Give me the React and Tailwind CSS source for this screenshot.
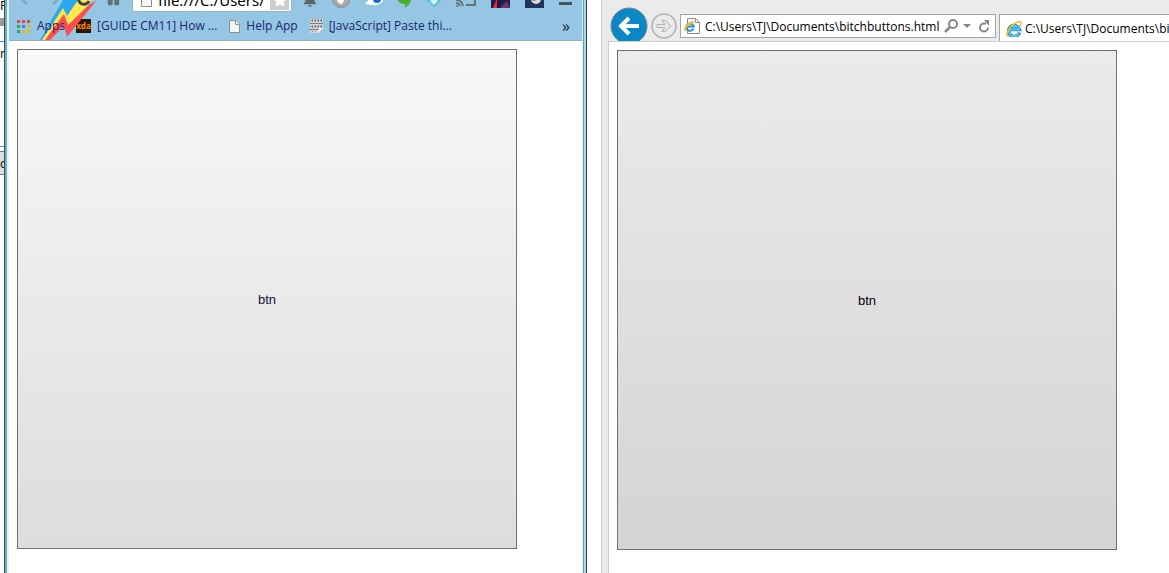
import { FaBell, FaPause, FaStar } from "react-icons/fa";

// Icons
const PageIcon = () => (
  <svg width="11" height="13" viewBox="0 0 11 13" className="shrink-0">
    <path d="M.5.5h6l4 4v8H.5z" fill="#f7f7f7" stroke="#8d8d8d" />
    <path d="M6.5.5v4h4" fill="#fff" stroke="#8d8d8d" />
  </svg>
);

const appColors = [
  "#e8453c", "#e8453c", "#e8453c",
  "#2fa35a", "#3b7ded", "#f4b400",
  "#2fa35a", "#f4b400", "#f4b400",
];

const AppsIcon = () => (
  <svg width="13" height="13" viewBox="0 0 13 13" className="shrink-0">
    {appColors.map((color, i) => (
      <rect
        key={i}
        x={(i % 3) * 5}
        y={Math.floor(i / 3) * 5}
        width="3"
        height="3"
        fill={color}
      />
    ))}
  </svg>
);

const PasteIcon = () => (
  <svg width="13" height="14" viewBox="0 0 13 14" className="shrink-0">
    <path d="M0 0h13v9l-4 5H0z" fill="#d4d4d4" />
    <path
      d="M1 1.500h12M0 4.500h13M1 7.500h12M0 10.500h9"
      stroke="#777"
      strokeDasharray="2 1"
    />
    <path
      d="M2.500 0v14M5.500 0v14M8.500 0v12M11.500 0v9"
      stroke="#888"
      strokeDasharray="1 1"
    />
    <path d="M8 14l5-5H9z" fill="#fff" />
  </svg>
);

const Bolt = () => (
  <svg
    width="60"
    height="41"
    viewBox="0 0 60 41"
    className="pointer-events-none absolute top-0 left-[31px]"
  >
    <path d="M23 0H38L26 20L22 12L5 40H0z" fill="#29a9ee" />
    <path d="M38 0H52L27 30L23 19L8 40H2L23 8L27 16z" fill="#ffe94f" />
    <path d="M50 4L56 1L27 37L24 26L10 40H5L24 14L28 25z" fill="#ff4e50" />
  </svg>
);

const IeLogo = ({ size }) => (
  <svg width={size} height={size} viewBox="0 0 16 16" className="shrink-0">
    <path
      d="M13.500 11.500A5.500 5.500 0 1 1 13.500 8.500H4"
      fill="none"
      stroke="#2385c4"
      strokeWidth="3.400"
    />
    <path
      d="M13.300 11A5.300 5.300 0 1 1 13.200 8.500H4"
      fill="none"
      stroke="#5cc0ee"
      strokeWidth="2"
    />
    <path
      d="M3 15C-1 16 1 9 6 4.500C10 1 15-.5 15 2c0 1-.4 2-1 3"
      fill="none"
      stroke="#f3bd1d"
      strokeWidth="1.500"
    />
  </svg>
);

const IePageIcon = () => (
  <svg width="16" height="16" viewBox="0 0 16 16" className="shrink-0">
    <path d="M3.500.5h8l4 4v11h-12z" fill="#fff" stroke="#8a8a8a" />
    <path d="M11.500.5v4h4" fill="none" stroke="#8a8a8a" />
    <path
      d="M9.500 10.500A3.700 3.700 0 1 1 9.700 8.500H3"
      fill="none"
      stroke="#2f8fd8"
      strokeWidth="2"
    />
    <path
      d="M1.500 13C0 11 3 5 10 4"
      fill="none"
      stroke="#f3bd1d"
      strokeWidth="2"
    />
  </svg>
);

// Only the lower part of these shows, so each one is drawn from its bottom edge
const extensions = [
  {
    name: "Notifications",
    width: 14,
    art: <FaBell size={14} color="#5f666b" className="mb-[5px]" />,
  },
  {
    name: "Block",
    width: 18,
    art: (
      <svg width="18" height="18" viewBox="0 0 18 18" className="mb-1">
        <path d="M5.500 1h7L17 5.500v7L12.500 17h-7L1 12.500v-7z" fill="#aaa" stroke="#858585" />
        <path d="M6 5h6v6l-2 3H8l-3-3z" fill="#fff" />
      </svg>
    ),
  },
  {
    name: "Messages",
    width: 18,
    art: (
      <svg width="18" height="16" viewBox="0 0 18 16" className="mb-[6px]">
        <path d="M3 3h15v8q-4 5-11 4l-7-1l3-3z" fill="#fff" />
        <circle cx="12" cy="9" r="4" fill="#1464d2" />
      </svg>
    ),
  },
  {
    name: "Hangouts",
    width: 13,
    art: (
      <svg width="13" height="14" viewBox="0 0 13 14" className="mb-1">
        <path d="M0 0h13v7q-1 3-6 7v-4Q2 10 0 7z" fill="#4caf35" />
      </svg>
    ),
  },
  {
    name: "Downloads",
    width: 14,
    art: (
      <svg width="14" height="14" viewBox="0 0 14 14" className="mb-[5px]">
        <path d="M0 0h14v8l-7 6l-7-6z" fill="#57c3cb" />
        <path d="M3 8l4-2l4 2l-4 4z" fill="#d4f5f5" />
      </svg>
    ),
  },
  {
    name: "Cast",
    width: 20,
    art: (
      <svg
        width="20"
        height="14"
        viewBox="0 0 20 14"
        className="mb-[5px]"
        fill="none"
        stroke="#66747c"
        strokeWidth="2"
      >
        <path d="M1 4V1h18v11h-9M0 7q6 0 7 6M0 10q3 0 4 3" />
        <circle cx="1" cy="13" r="1" fill="#66747c" stroke="none" />
      </svg>
    ),
  },
  {
    name: "Speed",
    width: 19,
    art: (
      <svg width="19" height="16" viewBox="0 0 19 16" className="mb-1">
        <path d="M0 0h19v16H0z" fill="#1c1f4c" />
        <path d="M10 14l6-5l3 7h-9z" fill="#6b3467" />
        <path d="M6 6l-4 10h4z" fill="#f22" />
      </svg>
    ),
  },
  {
    name: "Night mode",
    width: 19,
    art: (
      <svg width="19" height="16" viewBox="0 0 19 16" className="mb-1">
        <path d="M0 0h19v16H0z" fill="#1e355c" />
        <circle cx="11" cy="7" r="5" fill="#dedede" />
        <circle cx="9" cy="6" r="3" fill="#888" />
      </svg>
    ),
  },
  {
    name: "Menu",
    width: 13,
    art: (
      <svg width="13" height="14" viewBox="0 0 13 14" className="mb-[7px]">
        <path d="M0 7h13v2H0zM0 11h13v3H0z" fill="#47545c" />
      </svg>
    ),
  },
];

const bookmarks = [
  {
    label: "[GUIDE CM11] How ...",
    icon: (
      <span className="flex h-[14px] w-[15px] shrink-0 items-center justify-center bg-[#2b1600] text-[8px] font-bold text-[#ff8800]">
        xda
      </span>
    ),
  },
  { label: "Help App", icon: <PageIcon /> },
  { label: "[JavaScript] Paste thi...", icon: <PasteIcon /> },
];

// Strip of the window that lies behind everything
const BackgroundWindow = () => (
  <div className="flex w-1 shrink-0 flex-col overflow-hidden bg-white text-xs text-[#111]">
    <div className="h-[18px] leading-3">F</div>
    <div className="h-2 bg-[#999]" />
    <div className="h-4 border-b border-[#3b9bd8]" />
    <div className="h-[105px] border-b border-[#3b9bd8] leading-6">n</div>
    <div className="mt-1 h-6 border-y border-[#777] bg-[#ddd] leading-6">c</div>
  </div>
);

const Chrome = () => (
  <section className="flex min-w-0 shrink-0 basis-[583px] border-x border-l-[#3c4b54] border-r-[#303b42]">
    <div className="w-[4px] shrink-0 border-r-2 border-l-2 border-l-[#6fb0c4] border-r-[#e4f4f8] bg-[#a6dbea]" />
    <div className="relative flex min-w-0 flex-1 flex-col">
      <header className="border-b border-[#a3acb0] bg-[#95c7e4]">
        <div className="flex h-3 items-end">
          <button aria-label="Back" className="ml-[10px] w-7">
            <svg
              width="14"
              height="14"
              viewBox="0 0 14 14"
              className="mb-[7px]"
              fill="none"
              stroke="#79abc9"
              strokeWidth="3"
            >
              <path d="M8 1L2 7l6 6M2 7h12" />
            </svg>
          </button>
          <button aria-label="Forward" className="w-7">
            <svg
              width="14"
              height="14"
              viewBox="0 0 14 14"
              className="mb-[7px]"
              fill="none"
              stroke="#79abc9"
              strokeWidth="3"
            >
              <path d="M6 1l6 6l-6 6M12 7H0" />
            </svg>
          </button>
          <button aria-label="Reload" className="relative z-10 ml-[2px] w-[30px]">
            <svg
              width="14"
              height="14"
              viewBox="0 0 14 14"
              className="mb-[6px]"
              fill="none"
              stroke="#3b4449"
              strokeWidth="3"
            >
              <path d="M12 9A5.500 5.500 0 1 1 11 3" />
            </svg>
          </button>
          <button aria-label="Pause" className="w-[25px]">
            <FaPause size={13} color="#63727a" className="mb-[6px]" />
          </button>
          <div className="flex h-6 w-[160px] shrink-0 items-center rounded-[3px] border border-[#8bb6cd] bg-white pr-[2px] pl-2">
            <PageIcon />
            <input
              aria-label="Address"
              defaultValue="file:///C:/Users/"
              className="ml-[6px] h-5 w-0 flex-1 text-[15px] text-black outline-none"
            />
            <button
              aria-label="Bookmark"
              className="flex h-5 w-[19px] items-center justify-center bg-[#ccc]"
            >
              <FaStar size={14} color="#fff" />
            </button>
          </div>
          <div className="mr-[10px] ml-[11px] flex flex-1 items-end justify-between">
            {extensions.map(({ name, width, art }) => (
              <button key={name} aria-label={name} className="shrink-0" style={{ width }}>
                {art}
              </button>
            ))}
          </div>
        </div>
        <nav className="flex h-7 items-center pl-2 font-['Open_Sans'] text-xs text-[#20236f]">
          <a href="#apps" className="flex items-center gap-[7px]">
            <AppsIcon />
            <span className="relative z-10">Apps</span>
          </a>
          <div className="ml-[11px] flex items-center gap-3">
            {bookmarks.map(({ label, icon }) => (
              <a
                key={label}
                href="#bookmark"
                className="flex items-center gap-[6px] whitespace-nowrap"
              >
                {icon}
                {label}
              </a>
            ))}
          </div>
          <button aria-label="More bookmarks" className="mr-3 ml-auto text-base text-[#222]">
            »
          </button>
        </nav>
      </header>
      <Bolt />
      <main className="flex-1 bg-white p-2">
        <button className="h-[500px] w-[500px] border border-[#707070] bg-linear-to-b from-[#f8f8f8] to-[#dddddd] pt-[2px] font-['Liberation_Sans'] text-[13px] text-[#11103f]">
          btn
        </button>
      </main>
    </div>
    <div className="w-[4px] shrink-0 border-r-2 border-l border-l-[#dceff5] border-r-[#a2dcf0] bg-[#6b9cad]" />
  </section>
);

const InternetExplorer = () => (
  <section className="ml-[14px] flex min-w-0 flex-1 flex-col border-l border-[#cfcfcf] bg-[#ebebeb] pl-[6px]">
    <header className="flex h-[41px] shrink-0 items-end overflow-hidden pl-[2px] font-['Open_Sans'] text-xs text-black">
      <button aria-label="Back" className="-mb-1 shrink-0">
        <svg width="38" height="38" viewBox="0 0 38 38">
          <circle cx="19" cy="19" r="18" fill="#0b87c6" stroke="#6f8793" />
          <path
            d="M29 19H11M19 11l-8 8l8 8"
            fill="none"
            stroke="#fff"
            strokeWidth="4"
          />
        </svg>
      </button>
      <button aria-label="Forward" className="mb-[2px] ml-[3px] shrink-0">
        <svg width="26" height="26" viewBox="0 0 26 26" fill="none" stroke="#b0b0b0">
          <circle cx="13" cy="13" r="12" strokeWidth="1.500" />
          <path d="M6 11.500h8l-3-4h3l6 5.500l-6 5.500h-3l3-4H6z" />
        </svg>
      </button>
      <div className="mb-[3px] ml-[3px] flex h-6 w-[316px] shrink-0 items-center border border-[#a3a3a3] bg-white pr-[5px] pl-[3px]">
        <IePageIcon />
        <input
          aria-label="Address"
          defaultValue="C:\Users\TJ\Documents\bitchbuttons.html"
          className="ml-[5px] h-5 w-0 flex-1 pt-px outline-none"
        />
        <button aria-label="Search">
          <svg
            width="15"
            height="14"
            viewBox="0 0 15 14"
            fill="none"
            stroke="#858585"
            strokeWidth="2"
          >
            <circle cx="9" cy="5" r="4" />
            <path d="M6 8l-5 5" strokeWidth="2.500" />
          </svg>
        </button>
        <button aria-label="Search options" className="ml-1">
          <svg width="8" height="4" viewBox="0 0 8 4">
            <path d="M0 0h8L4 4z" fill="#858585" />
          </svg>
        </button>
        <button aria-label="Refresh" className="ml-[7px]">
          <svg width="12" height="13" viewBox="0 0 12 13">
            <path
              d="M8 3.500H6a4 4 0 1 0 4 4"
              fill="none"
              stroke="#858585"
              strokeWidth="2"
            />
            <path d="M6 0h5v6z" fill="#858585" />
          </svg>
        </button>
      </div>
      <button className="ml-[3px] flex h-[27px] flex-1 items-center overflow-hidden border-t border-l border-[#a3a3a3] bg-white pt-px pl-[6px] whitespace-nowrap">
        <IeLogo size={16} />
        <span className="ml-[3px]">C:\Users\TJ\Documents\bitchbuttons.html</span>
      </button>
    </header>
    <main className="flex-1 border-t border-l border-[#cfcfcf] bg-white p-2">
      <button className="h-[500px] w-[500px] border border-[#707070] bg-linear-to-b from-[#ebebeb] to-[#d4d4d4] pt-[2px] font-['Liberation_Sans'] text-[13px] text-black">
        btn
      </button>
    </main>
  </section>
);

const App = () => {
  return (
    <div className="flex h-screen overflow-hidden bg-white font-['Noto_Sans',sans-serif]">
      <BackgroundWindow />
      <Chrome />
      <InternetExplorer />
    </div>
  );
};

export default App;
